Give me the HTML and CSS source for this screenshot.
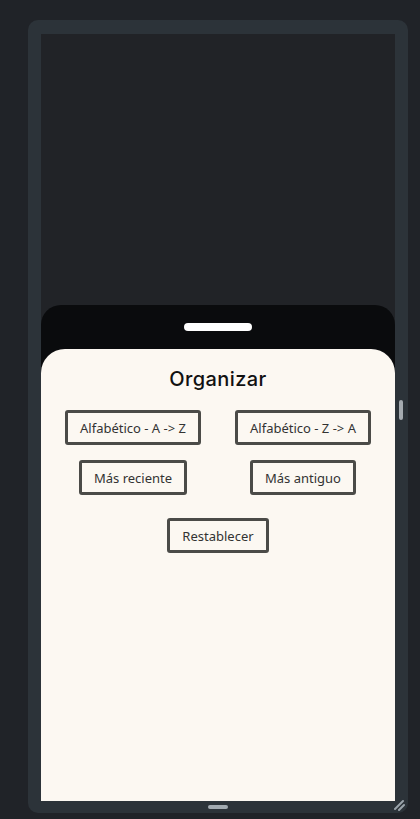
FILE: index.html
```html
<!DOCTYPE html>
<html lang="es">
<head>
<meta charset="utf-8">
<title>Organizar</title>
<link rel="stylesheet" href="styles.css">
</head>
<body>
<div class="device">
  <div class="screen">
    <div class="sheet">
      <div class="grab"><span class="grab-pill"></span></div>
      <div class="panel">
        <h1 class="title">Organizar</h1>
        <div class="options">
          <button class="opt">Alfabético - A -&gt; Z</button>
          <button class="opt">Alfabético - Z -&gt; A</button>
          <button class="opt">Más reciente</button>
          <button class="opt">Más antiguo</button>
        </div>
        <div class="reset-row">
          <button class="opt">Restablecer</button>
        </div>
      </div>
    </div>
  </div>
  <div class="device-bottom"><span class="home-pill"></span></div>
  <span class="scroll-thumb"></span>
  <svg class="resize" width="12" height="12" viewBox="0 0 12 12">
    <path d="M2 10 L10 2 M6 11 L11 6" stroke="#9aa3aa" stroke-width="2" stroke-linecap="round" fill="none"/>
  </svg>
</div>
</body>
</html>
```

FILE: styles.css
```css
html, body {
  margin: 0;
  padding: 0;
  background: #202328;
  height: 100%;
}

body {
  font-family: "Noto Sans", "DejaVu Sans", sans-serif;
}

.device {
  position: relative;
  box-sizing: border-box;
  margin: 20px 0 0 28px;
  width: 380px;
  height: 793px;
  padding: 14px 13px 0 13px;
  background: #2c3339;
  border-radius: 10px;
  display: flex;
  flex-direction: column;
}

.screen {
  flex: 1;
  background: #212327;
  display: flex;
  flex-direction: column;
  justify-content: flex-end;
}

.sheet {
  height: 496px;
  background: #0a0b0d;
  border-radius: 20px 20px 0 0;
  display: flex;
  flex-direction: column;
}

.grab {
  height: 44px;
  display: flex;
  justify-content: center;
  padding-top: 18px;
  box-sizing: border-box;
}

.grab-pill {
  width: 68px;
  height: 8px;
  border-radius: 4px;
  background: #ffffff;
}

.panel {
  flex: 1;
  background: #fcf8f2;
  border-radius: 24px 24px 0 0;
  padding-top: 18px;
  display: flex;
  flex-direction: column;
  align-items: center;
}

.title {
  margin: 0;
  font-family: "Inter", "Open Sans", sans-serif;
  font-weight: 500;
  font-size: 20px;
  line-height: 24px;
  letter-spacing: 0.4px;
  color: #111;
}

.options {
  margin-top: 19px;
  display: grid;
  grid-template-columns: 170px 170px;
  row-gap: 15px;
  justify-items: center;
}

.reset-row {
  margin-top: 23px;
}

.opt {
  box-sizing: border-box;
  height: 35px;
  padding: 0 12px;
  border: 3px solid #4b4b48;
  border-radius: 3px;
  background: #fcf8f2;
  color: #333333;
  font-family: "Noto Sans", sans-serif;
  font-size: 13px;
}

.device-bottom {
  height: 12px;
  display: flex;
  justify-content: center;
  align-items: center;
}

.home-pill {
  width: 20px;
  height: 4px;
  border-radius: 2px;
  background: #a3abb1;
}

.scroll-thumb {
  position: absolute;
  left: 371px;
  top: 380px;
  width: 4px;
  height: 20px;
  border-radius: 2px;
  background: #a5abb0;
}

.resize {
  position: absolute;
  right: 3px;
  bottom: 2px;
}
```
